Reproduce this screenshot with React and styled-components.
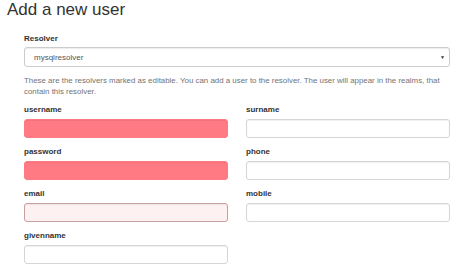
import React from "react";
import styled, { createGlobalStyle } from "styled-components";

const Global = createGlobalStyle`
  html, body { margin: 0; padding: 0; background: #fff; }
  body { font-family: "Liberation Sans", Arial, sans-serif; color: #333; }
  * { box-sizing: border-box; }
`;

const Page = styled.div`
  padding: 0 7px;
  width: 474px;
  height: 270px;
  overflow: hidden;
`;

const Title = styled.h2`
  margin: 0;
  font-size: 17px;
  line-height: 20px;
  font-weight: 400;
  color: #333;
`;

const Form = styled.div`
  margin: 13px 0 0 17px;
  width: 426px;
`;

const Label = styled.label`
  display: block;
  font-size: 8px;
  line-height: 12px;
  font-weight: 700;
  color: #333;
  margin-bottom: ${(p) => (p.$tight ? "2px" : "3px")};
`;

const SelectBox = styled.div`
  height: 20px;
  border: 1px solid #ccc;
  border-radius: 3px;
  display: flex;
  align-items: center;
  justify-content: space-between;
  padding: 0 4px 0 9px;
  font-size: 8px;
  color: #555;
  box-shadow: inset 0 1px 1px rgba(0, 0, 0, 0.075);
`;

const Caret = styled.span`
  font-size: 5px;
  color: #333;
`;

const Help = styled.p`
  margin: 8px 0 6.5px;
  font-size: 7.9px;
  line-height: 11px;
  color: #737373;
`;

const Grid = styled.div`
  display: grid;
  grid-template-columns: 204px 204px;
  column-gap: 18px;
  align-items: start;
`;

const Column = styled.div`
  display: flex;
  flex-direction: column;
`;

const Group = styled.div`
  margin-bottom: 8px;
`;

const Input = styled.div`
  height: 19px;
  border-radius: 3px;
  border: 1px solid
    ${(p) => (p.$state === "error" ? "#ff7a82" : p.$state === "warn" ? "#c9a0a0" : "#d6d6d6")};
  background: ${(p) =>
    p.$state === "error" ? "#ff7a82" : p.$state === "warn" ? "#fdf1f1" : "#fff"};
  box-shadow: inset 0 1px 1px rgba(0, 0, 0, 0.06);
`;

const Field = ({ label, state }) => (
  <Group>
    <Label>{label}</Label>
    <Input $state={state} />
  </Group>
);

export default function App() {
  return (
    <>
      <Global />
      <Page>
        <Title>Add a new user</Title>
        <Form>
          <Label $tight>Resolver</Label>
          <SelectBox>
            <span>mysqlresolver</span>
            <Caret>▼</Caret>
          </SelectBox>
          <Help>
            These are the resolvers marked as editable. You can add a user to the resolver. The
            user will appear in the realms, that contain this resolver.
          </Help>
          <Grid>
            <Column>
              <Field label="username" state="error" />
              <Field label="password" state="error" />
              <Field label="email" state="warn" />
              <Field label="givenname" />
            </Column>
            <Column>
              <Field label="surname" />
              <Field label="phone" />
              <Field label="mobile" />
            </Column>
          </Grid>
        </Form>
      </Page>
    </>
  );
}
